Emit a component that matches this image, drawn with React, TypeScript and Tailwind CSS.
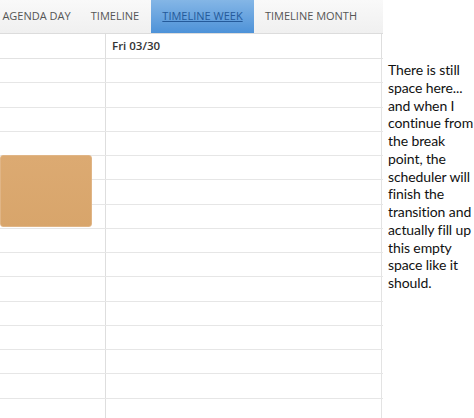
import React from "react";

const rows = Array.from({ length: 15 });

const lines = [
  "There is still",
  "space here...",
  "and when I",
  "continue from",
  "the break",
  "point, the",
  "scheduler will",
  "finish the",
  "transition and",
  "actually fill up",
  "this empty",
  "space like it",
  "should.",
];

export default function App() {
  return (
    <div className="w-[474px] h-[418px] bg-white overflow-hidden flex items-start">
      <div className="w-[383px] flex flex-col shrink-0">
        {/* tab bar */}
        <div className="h-[34px] shrink-0 flex items-stretch bg-gradient-to-b from-[#f9f9f9] to-[#f0f0f0] border-b border-[#dcdcdc] overflow-hidden text-[11px] text-[#555]" style={{ fontFamily: '"Open Sans", sans-serif' }}>
          <div className="ml-[-6px] w-[85px] flex items-center justify-center shrink-0">AGENDA DAY</div>
          <div className="w-[72px] flex items-center justify-center shrink-0">TIMELINE</div>
          <div className="w-[103px] flex items-center justify-center shrink-0 bg-gradient-to-b from-[#84b6e6] to-[#4d92d8] text-[#245a9a] underline">TIMELINE WEEK</div>
          <div className="w-[114px] flex items-center justify-center shrink-0">TIMELINE MONTH</div>
        </div>
        {/* grid */}
        <div className="relative flex flex-col shrink-0" style={{ fontFamily: '"Open Sans", sans-serif' }}>
          <div className="h-[25px] shrink-0 flex border-b border-[#e2e2e2]">
            <div className="w-[106px] border-r border-[#dedede] shrink-0" />
            <div className="w-[276px] border-r border-[#dedede] flex items-center pl-[6px] text-[11.5px] font-semibold text-[#333]">Fri 03/30</div>
          </div>
          {rows.map((_, i) => (
            <div key={i} className="h-[24.27px] shrink-0 flex border-b border-[#e6e6e6]">
              <div className="w-[106px] border-r border-[#dedede] shrink-0" />
              <div className="w-[276px] border-r border-[#e3e3e3]" />
            </div>
          ))}
          <div className="absolute left-0 top-[121px] w-[92px] h-[72px] rounded-[3px] bg-gradient-to-b from-[#dcaa72] to-[#d8a56b] border border-[#e0b586]" />
        </div>
      </div>
      <div className="pl-[5px] pt-[61px] text-[14px] leading-[17.75px] text-[#111] tracking-[-0.1px]" style={{ fontFamily: 'Lato, sans-serif' }}>
        {lines.map((l, i) => (
          <div key={i} className="whitespace-nowrap">{l}</div>
        ))}
      </div>
    </div>
  );
}
